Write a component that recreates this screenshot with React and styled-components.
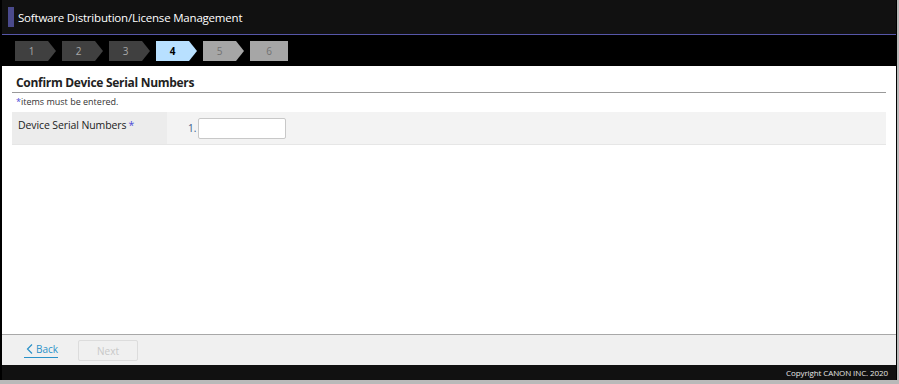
import React from "react";
import styled, { createGlobalStyle } from "styled-components";

const Global = createGlobalStyle`
  html, body {
    margin: 0;
    padding: 0;
    background: #b9b9b9;
    font-family: "Open Sans", "Noto Sans", sans-serif;
  }
`;

const Window = styled.div`
  width: 894px;
  height: 380px;
  border-left: 2px solid #000;
  border-right: 1px solid #000;
  display: flex;
  flex-direction: column;
  background: #fff;
`;

const TitleBar = styled.div`
  height: 34px;
  background: #111;
  border-bottom: 1px solid #5656a8;
  display: flex;
  align-items: center;
  padding-left: 6px;
  gap: 4px;
  flex-shrink: 0;
`;

const TitleMark = styled.div`
  width: 6px;
  height: 20px;
  background: #4a4a8c;
`;

const TitleText = styled.div`
  color: #fff;
  font-size: 11.5px;
  letter-spacing: -0.2px;
`;

const StepBar = styled.div`
  height: 31px;
  background: #000;
  display: flex;
  align-items: center;
  padding-left: 13px;
  flex-shrink: 0;
`;

const stepColors = {
  done: { bg: "#404040", fg: "#a8a8a8" },
  current: { bg: "#b8e0ff", fg: "#000" },
  todo: { bg: "#a6a6a6", fg: "#727272" },
};

const Step = styled.div`
  position: relative;
  width: ${(p) => (p.$last ? 38 : 33)}px;
  height: 20px;
  margin-right: ${(p) => (p.$last ? 0 : 14)}px;
  background: ${(p) => stepColors[p.$state].bg};
  color: ${(p) => stepColors[p.$state].fg};
  font-size: 10px;
  font-weight: ${(p) => (p.$state === "current" ? 700 : 400)};
  display: flex;
  align-items: center;
  justify-content: center;
  box-sizing: border-box;

  &::after {
    content: "";
    display: ${(p) => (p.$last ? "none" : "block")};
    position: absolute;
    left: 100%;
    top: 0;
    border-top: 10px solid transparent;
    border-bottom: 10px solid transparent;
    border-left: 8px solid ${(p) => stepColors[p.$state].bg};
  }
`;

const Content = styled.div`
  flex: 1;
  padding: 8px 10px 0 10px;
  background: #fff;
`;

const Heading = styled.div`
  font-size: 12px;
  font-weight: 700;
  color: #222;
  padding: 0 0 1px 4px;
  border-bottom: 1px solid #999;
  letter-spacing: -0.3px;
`;

const Note = styled.div`
  font-size: 9px;
  color: #333;
  padding: 2px 0 0 4px;
  height: 19px;
  box-sizing: border-box;
`;

const Star = styled.span`
  color: #4b4bd8;
  margin-left: ${(p) => p.$gap || 0}px;
`;

const Row = styled.div`
  display: flex;
  height: 32px;
  background: #f3f3f3;
  border-bottom: 1px solid #e6e6e6;
`;

const LabelCell = styled.div`
  width: 155px;
  background: #ececec;
  font-size: 10.5px;
  letter-spacing: -0.1px;
  color: #222;
  padding: 6px 0 0 6px;
  box-sizing: border-box;
`;

const ValueCell = styled.div`
  display: flex;
  align-items: center;
  padding-left: 21px;
  gap: 2px;
`;

const Num = styled.span`
  font-size: 10px;
  color: #3a5a8a;
`;

const Input = styled.input`
  width: 88px;
  height: 21px;
  box-sizing: border-box;
  border: 1px solid #c8c8c8;
  border-radius: 2px;
  background: #fff;
`;

const Footer = styled.div`
  height: 30px;
  background: #f0f0f0;
  border-top: 1px solid #a8a8a8;
  display: flex;
  align-items: center;
  padding-left: 22px;
  gap: 20px;
  flex-shrink: 0;
`;

const BackLink = styled.a`
  display: flex;
  align-items: center;
  gap: 3px;
  color: #2a91c8;
  font-size: 10px;
  border-bottom: 1px solid #2a91c8;
  padding: 0 0 1px 2px;
  cursor: pointer;
`;

const NextButton = styled.button`
  width: 60px;
  height: 21px;
  border: 1px solid #dcdcdc;
  border-radius: 2px;
  background: #f0f0f0;
  color: #c8c8c8;
  font-family: inherit;
  font-size: 10px;
  margin-top: 1px;
`;

const BottomBar = styled.div`
  height: 15px;
  background: #111;
  color: #e6e6e6;
  font-size: 8px;
  letter-spacing: -0.1px;
  display: flex;
  align-items: center;
  justify-content: flex-end;
  padding-right: 8px;
  flex-shrink: 0;
`;

const steps = ["done", "done", "done", "current", "todo", "todo"];

export default function App() {
  return (
    <>
      <Global />
      <Window>
        <TitleBar>
          <TitleMark />
          <TitleText>Software Distribution/License Management</TitleText>
        </TitleBar>
        <StepBar>
          {steps.map((s, i) => (
            <Step key={i} $state={s} $last={i === steps.length - 1}>
              {i + 1}
            </Step>
          ))}
        </StepBar>
        <Content>
          <Heading>Confirm Device Serial Numbers</Heading>
          <Note>
            <Star>*</Star>items must be entered.
          </Note>
          <Row>
            <LabelCell>
              Device Serial Numbers<Star $gap={2}>*</Star>
            </LabelCell>
            <ValueCell>
              <Num>1.</Num>
              <Input type="text" />
            </ValueCell>
          </Row>
        </Content>
        <Footer>
          <BackLink>
            <svg width="7" height="10" viewBox="0 0 7 10">
              <path d="M6 0.5 L1.5 5 L6 9.5" fill="none" stroke="#2a91c8" strokeWidth="1.2" />
            </svg>
            Back
          </BackLink>
          <NextButton disabled>Next</NextButton>
        </Footer>
        <BottomBar>Copyright CANON INC. 2020</BottomBar>
      </Window>
    </>
  );
}
